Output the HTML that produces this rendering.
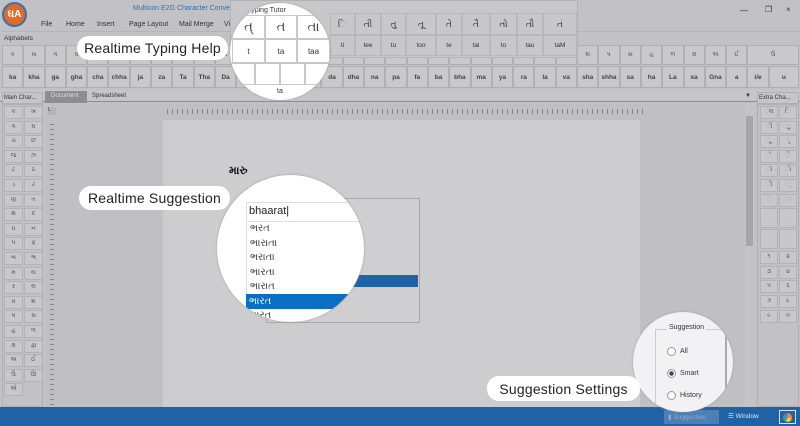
<!DOCTYPE html>
<html><head><meta charset="utf-8">
<style>
*{margin:0;padding:0;box-sizing:border-box}
body{width:800px;height:426px;overflow:hidden;background:#c2c2c6;font-family:"Liberation Sans","Noto Sans CJK SC",sans-serif;font-size:7px;color:#333;position:relative}
.a{position:absolute}
.row{position:absolute;display:flex}
.row div{width:21.3px;height:100%;border:1px solid #b0b0b4;background:#c9c9cc;display:flex;align-items:center;justify-content:center;margin-right:0}
.r2 div{font-weight:bold;font-size:6.5px;color:#444}
.r1 div{font-size:6px;color:#555}
.lp div,.rp div{position:absolute;width:18px;height:13px;border:1px solid #b3b3b7;background:#c8c8cb;display:flex;align-items:center;justify-content:center;font-size:6px;color:#555}
.pill{position:absolute;background:#fff;border-radius:12px;font-size:14px;color:#222;display:flex;align-items:center;justify-content:center;letter-spacing:.2px}
.circ{position:absolute;border-radius:50%;background:#fff;overflow:hidden;box-shadow:0 0 2px #999}
.tt{position:absolute;border:1px solid #c8c8c8;display:flex;align-items:center;justify-content:center;color:#333}
</style></head><body>
<div class="a" style="left:2px;top:2px;width:25px;height:25px;border-radius:50%;background:#e06a2a;border:2px solid #2f74b5;color:#fff;font-weight:bold;font-size:10px;display:flex;align-items:center;justify-content:center">ઘA</div>
<div class="a" style="left:133px;top:5px;color:#2f6fb0;font-size:7px">Multicon E2G Character Converter</div>
<div class="a" style="left:740px;top:6px;font-size:8px;color:#333">&#8212;</div>
<div class="a" style="left:765px;top:5px;font-size:8px;color:#333">&#10064;</div>
<div class="a" style="left:786px;top:5px;font-size:8px;color:#333">×</div>
<div class="a" style="left:41px;top:21px;font-size:7px;color:#333">File</div>
<div class="a" style="left:66px;top:21px;font-size:7px">Home</div>
<div class="a" style="left:97px;top:21px;font-size:7px">Insert</div>
<div class="a" style="left:129px;top:21px;font-size:7px">Page Layout</div>
<div class="a" style="left:179px;top:21px;font-size:7px">Mail Merge</div>
<div class="a" style="left:224px;top:21px;font-size:7px">View</div>
<div class="a" style="left:0;top:31px;width:800px;height:1px;background:#b5b5b9"></div>
<div class="a" style="left:4px;top:35px;font-size:6.5px">Alphabets</div>
<div class="row r1" style="left:2px;top:45px;height:20px;width:797px">
<div>ક</div><div>ખ</div><div>ગ</div><div>ઘ</div><div>ચ</div><div>છ</div><div>જ</div><div>ઝ</div><div>ટ</div><div>ઠ</div><div>ડ</div><div>ઢ</div><div>ણ</div><div>ત</div><div>થ</div><div>દ</div><div>ધ</div><div>ન</div><div>પ</div><div>ફ</div><div>બ</div><div>ભ</div><div>મ</div><div>ય</div><div>ર</div><div>લ</div><div>વ</div><div>શ</div><div>ષ</div><div>સ</div><div>હ</div><div>ળ</div><div>ક્ષ</div><div>અ</div><div>ઈ</div><div style="flex:1">ઉ</div></div>
<div class="row r2" style="left:2px;top:66px;height:22px;width:797px">
<div>ka</div><div>kha</div><div>ga</div><div>gha</div><div>cha</div><div>chha</div><div>ja</div><div>za</div><div>Ta</div><div>Tha</div><div>Da</div><div>Dha</div><div>Na</div><div>ta</div><div>tha</div><div>da</div><div>dha</div><div>na</div><div>pa</div><div>fa</div><div>ba</div><div>bha</div><div>ma</div><div>ya</div><div>ra</div><div>la</div><div>va</div><div>sha</div><div>shha</div><div>sa</div><div>ha</div><div>La</div><div>xa</div><div>Gna</div><div>a</div><div>i/e</div><div style="flex:1">u</div></div>
<div class="a" style="left:230px;top:0;width:348px;height:58px;background:#c8c8cb;border:1px solid #b3b3b7"></div>
<div class="a" style="left:330px;top:13px;height:22px;display:flex;font-size:9px;color:#444">
<div class="tt" style="position:static;width:25px;border-color:#b8b8bb">િ</div><div class="tt" style="position:static;width:26px;border-color:#b8b8bb">તી</div><div class="tt" style="position:static;width:25px;border-color:#b8b8bb">તુ</div><div class="tt" style="position:static;width:30px;border-color:#b8b8bb">તૂ</div><div class="tt" style="position:static;width:26px;border-color:#b8b8bb">તે</div><div class="tt" style="position:static;width:28px;border-color:#b8b8bb">તૈ</div><div class="tt" style="position:static;width:27px;border-color:#b8b8bb">તો</div><div class="tt" style="position:static;width:26px;border-color:#b8b8bb">તૌ</div><div class="tt" style="position:static;width:34px;border-color:#b8b8bb">તં</div></div>
<div class="a" style="left:330px;top:35px;height:21px;display:flex;font-size:6.5px;color:#444">
<div class="tt" style="position:static;width:25px;border-color:#b8b8bb">ti</div><div class="tt" style="position:static;width:26px;border-color:#b8b8bb">tee</div><div class="tt" style="position:static;width:25px;border-color:#b8b8bb">tu</div><div class="tt" style="position:static;width:30px;border-color:#b8b8bb">too</div><div class="tt" style="position:static;width:26px;border-color:#b8b8bb">te</div><div class="tt" style="position:static;width:28px;border-color:#b8b8bb">tai</div><div class="tt" style="position:static;width:27px;border-color:#b8b8bb">to</div><div class="tt" style="position:static;width:26px;border-color:#b8b8bb">tau</div><div class="tt" style="position:static;width:34px;border-color:#b8b8bb">taM</div></div>
<div class="a" style="left:0;top:90px;width:800px;height:12px;background:#c6c6ca;border-bottom:1px solid #8c8c90"></div>
<div class="a" style="left:2px;top:92px;width:41px;height:12px;border:1px solid #b0b0b4;font-size:6px;padding:2px 1px;background:#c6c6ca">Main Char...</div>
<div class="a" style="left:45px;top:91px;width:42px;height:12px;background:#8d8d92;color:#ddd;font-size:6px;padding:2px 6px">Document</div>
<div class="a" style="left:92px;top:93px;font-size:6px">Spreadsheet</div>
<div class="a" style="left:745px;top:93px;font-size:6px">&#9660;</div>
<div class="a" style="left:757px;top:92px;width:42px;height:12px;border:1px solid #b0b0b4;font-size:6px;padding:2px 1px;background:#c6c6ca">Extra Cha...</div>
<div class="a lp" style="left:2px;top:104px;width:41px;height:303px;border:1px solid #b0b0b4">
<div style="left:1px;top:1px;width:19px">ક</div><div style="left:21px;top:1px;width:19px">ખ</div>
<div style="left:1px;top:16px;width:19px">ગ</div><div style="left:21px;top:16px;width:19px">ઘ</div>
<div style="left:1px;top:30px;width:19px">ચ</div><div style="left:21px;top:30px;width:19px">છ</div>
<div style="left:1px;top:45px;width:19px">જ</div><div style="left:21px;top:45px;width:19px">ઝ</div>
<div style="left:1px;top:59px;width:19px">ટ</div><div style="left:21px;top:59px;width:19px">ઠ</div>
<div style="left:1px;top:74px;width:19px">ડ</div><div style="left:21px;top:74px;width:19px">ઢ</div>
<div style="left:1px;top:89px;width:19px">ણ</div><div style="left:21px;top:89px;width:19px">ત</div>
<div style="left:1px;top:103px;width:19px">થ</div><div style="left:21px;top:103px;width:19px">દ</div>
<div style="left:1px;top:118px;width:19px">ધ</div><div style="left:21px;top:118px;width:19px">ન</div>
<div style="left:1px;top:132px;width:19px">પ</div><div style="left:21px;top:132px;width:19px">ફ</div>
<div style="left:1px;top:147px;width:19px">બ</div><div style="left:21px;top:147px;width:19px">ભ</div>
<div style="left:1px;top:162px;width:19px">મ</div><div style="left:21px;top:162px;width:19px">ય</div>
<div style="left:1px;top:176px;width:19px">ર</div><div style="left:21px;top:176px;width:19px">લ</div>
<div style="left:1px;top:191px;width:19px">વ</div><div style="left:21px;top:191px;width:19px">શ</div>
<div style="left:1px;top:205px;width:19px">ષ</div><div style="left:21px;top:205px;width:19px">સ</div>
<div style="left:1px;top:220px;width:19px">હ</div><div style="left:21px;top:220px;width:19px">ળ</div>
<div style="left:1px;top:235px;width:19px">ક્ષ</div><div style="left:21px;top:235px;width:19px">જ્ઞ</div>
<div style="left:1px;top:249px;width:19px">અ</div><div style="left:21px;top:249px;width:19px">ઈ</div>
<div style="left:1px;top:264px;width:19px">ઉ</div><div style="left:21px;top:264px;width:19px">ઊ</div>
<div style="left:1px;top:278px;width:19px">એ</div>
</div>
<div class="a" style="left:46px;top:104px;width:710px;height:303px;background:#c0c0c4"></div>
<div class="a" style="left:48px;top:107px;width:8px;height:8px;background:#b4b4b8;font-size:5px">L</div>
<div class="a" style="left:50px;top:120px;width:4px;height:287px;background:repeating-linear-gradient(#c0c0c4 0 4px,#888 4px 5px)"></div>
<div class="a" style="left:163px;top:109px;width:480px;height:5px;background:repeating-linear-gradient(90deg,#c0c0c4 0 4px,#888 4px 5px)"></div>
<div class="a" style="left:163px;top:120px;width:477px;height:287px;background:#cdcdcf"></div>
<div class="a" style="left:229px;top:165px;font-size:11px;font-weight:bold;color:#111">મારુ</div>
<div class="a" style="left:745px;top:104px;width:10px;height:303px;background:#c4c4c8"></div>
<div class="a" style="left:746px;top:116px;width:7px;height:130px;background:#a6a6aa"></div>
<div class="a rp" style="left:757px;top:104px;width:42px;height:303px;border:1px solid #b0b0b4">
<div style="left:2px;top:1px">ંલ</div><div style="left:21px;top:1px">િ</div>
<div style="left:2px;top:16px">ી</div><div style="left:21px;top:16px">ુ</div>
<div style="left:2px;top:30px">ૂ</div><div style="left:21px;top:30px">ૃ</div>
<div style="left:2px;top:45px">ે</div><div style="left:21px;top:45px">ૈ</div>
<div style="left:2px;top:59px">ો</div><div style="left:21px;top:59px">ૌ</div>
<div style="left:2px;top:74px">ી</div><div style="left:21px;top:74px">્</div>
<div style="left:2px;top:89px">ં</div><div style="left:21px;top:89px">ઃ</div>
<div style="left:2px;top:103px;height:20px"></div><div style="left:21px;top:103px;height:20px"></div>
<div style="left:2px;top:124px;height:20px"></div><div style="left:21px;top:124px;height:20px"></div>
<div style="left:2px;top:146px">૧</div><div style="left:21px;top:146px">૨</div>
<div style="left:2px;top:161px">૩</div><div style="left:21px;top:161px">૪</div>
<div style="left:2px;top:175px">૫</div><div style="left:21px;top:175px">૬</div>
<div style="left:2px;top:190px">૭</div><div style="left:21px;top:190px">૮</div>
<div style="left:2px;top:205px">૯</div><div style="left:21px;top:205px">૦</div>
</div>
<div class="a" style="left:266px;top:198px;width:154px;height:125px;background:#cfcfd1;border:1px solid #a9a9ad"></div>
<div class="a" style="left:266px;top:275px;width:152px;height:12px;background:#1d63a6"></div>
<div class="a" style="left:0;top:407px;width:800px;height:19px;background:#1f62a5"></div>
<div class="a" style="left:664px;top:410px;width:55px;height:14px;background:#4d7fb2;color:#8fb0d0;font-size:6.5px;padding:3px 4px">&#9646; Suggestion</div>
<div class="a" style="left:728px;top:412px;color:#dfe8f2;font-size:6.5px">&#9776; Window</div>
<div class="a" style="left:779px;top:410px;width:17px;height:14px;border:1px solid #dde;background:#2d5e94"><div class="a" style="left:3px;top:2px;width:9px;height:9px;border-radius:50%;background:conic-gradient(#e84 0 30%,#fc3 0 55%,#3a8 0 75%,#48c 0)"></div></div>
<div class="circ" style="left:230px;top:3px;width:100px;height:97px;background:#fff">
 <div class="a" style="left:12px;top:4px;font-size:7px;color:#333">c Typing Tutor</div>
 <div class="tt" style="left:2px;top:12px;width:33px;height:24px;font-size:13px">ત્</div>
 <div class="tt" style="left:35px;top:12px;width:32px;height:24px;font-size:13px">ત</div>
 <div class="tt" style="left:67px;top:12px;width:33px;height:24px;font-size:13px">તા</div>
 <div class="tt" style="left:2px;top:36px;width:33px;height:24px;font-size:8px">t</div>
 <div class="tt" style="left:35px;top:36px;width:32px;height:24px;font-size:8px">ta</div>
 <div class="tt" style="left:67px;top:36px;width:33px;height:24px;font-size:8px">taa</div>
 <div class="tt" style="left:0;top:60px;width:25px;height:22px"></div>
 <div class="tt" style="left:25px;top:60px;width:25px;height:22px"></div>
 <div class="tt" style="left:50px;top:60px;width:25px;height:22px"></div>
 <div class="tt" style="left:75px;top:60px;width:25px;height:22px"></div>
 <div class="a" style="left:47px;top:85px;font-size:7px;color:#333">ta</div>
</div>
<div class="pill" style="left:77px;top:36px;width:151px;height:24px">Realtime Typing Help</div>
<div class="circ" style="left:217px;top:175px;width:147px;height:147px">
 <div class="a" style="left:29px;top:27px;width:120px;height:20px;border:1px solid #ddd;font-size:11px;padding:2px 2px;color:#222">bhaarat|</div>
 <div class="a" style="left:29px;top:47px;width:120px;height:100px;border-left:1px solid #ddd;font-size:10px;color:#333;line-height:14.5px;padding-left:3px">ભરત<br>ભારાતા<br>ભરાતા<br>ભારતા<br>ભારાત</div>
 <div class="a" style="left:29px;top:119px;width:120px;height:15px;background:#0a6fc2;color:#fff;font-size:10px;padding-left:3px;line-height:15px">ભારત</div>
 <div class="a" style="left:32px;top:135px;font-size:10px;color:#333">ભારત</div>
</div>
<div class="pill" style="left:79px;top:186px;width:151px;height:24px">Realtime Suggestion</div>
<div class="circ" style="left:633px;top:312px;width:100px;height:100px;background:#f2f2f4">
 <div class="a" style="left:22px;top:17px;width:72px;height:90px;border:1px solid #ccc;border-right:2px solid #aaa"></div>
 <div class="a" style="left:34px;top:12px;padding:0 2px;background:#f2f2f4;font-size:7px;color:#333">Suggestion</div>
 <div class="a" style="left:34px;top:35px;width:9px;height:9px;border:1px solid #999;border-radius:50%;background:#fff"></div><div class="a" style="left:47px;top:36px;font-size:7px">All</div>
 <div class="a" style="left:34px;top:57px;width:9px;height:9px;border:1px solid #999;border-radius:50%;background:radial-gradient(#444 0 2px,#fff 2.5px)"></div><div class="a" style="left:47px;top:58px;font-size:7px">Smart</div>
 <div class="a" style="left:34px;top:79px;width:9px;height:9px;border:1px solid #999;border-radius:50%;background:#fff"></div><div class="a" style="left:47px;top:80px;font-size:7px">History</div>
</div>
<div class="pill" style="left:487px;top:376px;width:153px;height:25px">Suggestion Settings</div>
</body></html>
